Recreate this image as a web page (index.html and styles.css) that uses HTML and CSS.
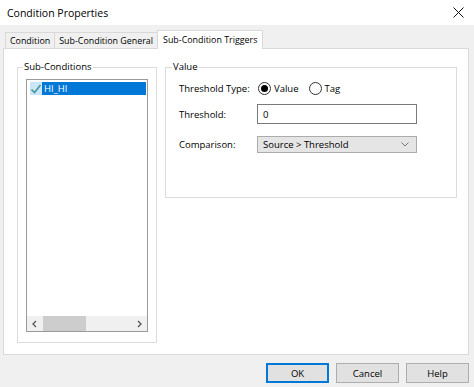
FILE: index.html
```html
<html lang="en">

<head>
    <meta charset="utf-8" />
    <title>Condition Properties</title>
    <link rel="stylesheet" href="styles.css">
</head>

<body>
    <div class="window">
        <div class="titlebar">
            <span class="title">Condition Properties</span>
            <svg class="close" viewBox="0 0 11 11">
                <path d="M0.5 0.5L10.5 10.5M10.5 0.5L0.5 10.5" stroke="#111" stroke-width="1" fill="none" />
            </svg>
        </div>
        <div class="content">
            <div class="tabs">
                <div class="tab">Condition</div>
                <div class="tab">Sub-Condition General</div>
                <div class="tab active">Sub-Condition Triggers</div>
            </div>
            <div class="panel">
                <fieldset class="group sub-group">
                    <legend>Sub-Conditions</legend>
                    <div class="listbox">
                        <div class="list-item">
                            <span class="check">
                                <svg viewBox="0 0 12 12">
                                    <path d="M1.5 6.5L4.5 9.5L10.5 2" stroke="#3f9a97" stroke-width="1.6" fill="none" />
                                </svg>
                            </span>
                            <span class="item-text">HI_HI</span>
                        </div>
                        <div class="hscroll">
                            <span class="arrow">
                                <svg viewBox="0 0 8 8"><path d="M5 1L2 4L5 7" stroke="#555" stroke-width="1.3" fill="none" /></svg>
                            </span>
                            <span class="thumb"></span>
                            <span class="track"></span>
                            <span class="arrow">
                                <svg viewBox="0 0 8 8"><path d="M3 1L6 4L3 7" stroke="#555" stroke-width="1.3" fill="none" /></svg>
                            </span>
                        </div>
                    </div>
                </fieldset>
                <fieldset class="group value-group">
                    <legend>Value</legend>
                    <div class="row row-type">
                        <span class="label">Threshold Type:</span>
                        <span class="radio checked"></span>
                        <span class="radio-text">Value</span>
                        <span class="radio"></span>
                        <span class="radio-text">Tag</span>
                    </div>
                    <div class="row row-threshold">
                        <span class="label">Threshold:</span>
                        <div class="textbox">0</div>
                    </div>
                    <div class="row row-compare">
                        <span class="label">Comparison:</span>
                        <div class="combo">
                            <span>Source &gt; Threshold</span>
                            <svg class="chevron" viewBox="0 0 8 5"><path d="M0.5 0.5L4 4L7.5 0.5" stroke="#777" stroke-width="1" fill="none" /></svg>
                        </div>
                    </div>
                </fieldset>
            </div>
            <div class="footer">
                <div class="button default">OK</div>
                <div class="button">Cancel</div>
                <div class="button">Help</div>
            </div>
        </div>
    </div>
</body>

</html>
```

FILE: styles.css
```css
* {
    box-sizing: border-box;
}

body {
    margin: 0;
    font-family: "Open Sans", "Noto Sans", sans-serif;
    font-size: 9.5px;
    color: #000;
    background: #f0f0f0;
}

.window {
    width: 474px;
    height: 387px;
    display: flex;
    flex-direction: column;
    overflow: hidden;
}

.titlebar {
    height: 25px;
    background: #fff;
    display: flex;
    align-items: center;
    justify-content: space-between;
    padding: 0 10px 0 7px;
}

.title {
    font-size: 10.5px;
}

.close {
    width: 11px;
    height: 11px;
}

.content {
    flex: 1;
    display: flex;
    flex-direction: column;
}

.tabs {
    height: 23px;
    display: flex;
    align-items: flex-end;
    padding-left: 5px;
    font-size: 8.9px;
}

.tab {
    height: 16px;
    padding: 0 4px;
    border: 1px solid #d9d9d9;
    border-bottom: none;
    margin-right: -1px;
    display: flex;
    align-items: center;
    background: #f0f0f0;
    white-space: nowrap;
}

.tab.active {
    height: 19px;
    padding: 0 5px 1px;
    background: #fff;
    margin-bottom: -1px;
    position: relative;
    z-index: 1;
}

.panel {
    margin-left: 3px;
    width: 466px;
    height: 307px;
    background: #fff;
    border: 1px solid #d9d9d9;
    display: flex;
    align-items: flex-start;
    gap: 8px;
    padding: 11px 0 0 13px;
}

.group {
    margin: 0;
    border: 1px solid #dcdcdc;
    min-width: 0;
}

.group legend {
    padding: 0 1px;
    line-height: 14px;
}

.sub-group {
    width: 140px;
    height: 283px;
    padding: 5px 8px 0;
}

.sub-group legend {
    margin-left: -3px;
}

.value-group {
    width: 292px;
    height: 138px;
    padding: 0 13px;
}

.value-group legend {
    margin-left: -7px;
}

.listbox {
    width: 122px;
    height: 253px;
    border: 1px solid #9a9a9a;
    display: flex;
    flex-direction: column;
    justify-content: space-between;
}

.list-item {
    display: flex;
    align-items: center;
    height: 13px;
    margin: 2px 0 0 3px;
}

.check {
    width: 12px;
    height: 13px;
    background: #cce4f7;
    display: flex;
    align-items: center;
}

.check svg {
    width: 12px;
    height: 12px;
}

.item-text {
    flex: 1;
    height: 13px;
    margin-right: 1px;
    background: #0078d7;
    color: #fff;
    padding-left: 2px;
    line-height: 13px;
}

.hscroll {
    height: 15px;
    display: flex;
    background: #f0f0f0;
}

.arrow {
    width: 16px;
    display: flex;
    align-items: center;
    justify-content: center;
}

.arrow svg {
    width: 8px;
    height: 8px;
}

.thumb {
    width: 43px;
    background: #cdcdcd;
}

.track {
    flex: 1;
}

.row {
    display: flex;
    align-items: center;
}

.label {
    width: 78px;
    flex-shrink: 0;
}

.row-type {
    height: 13px;
    margin-top: 8px;
}

.radio {
    width: 13px;
    height: 13px;
    margin-left: 1px;
    border: 1px solid #333;
    border-radius: 50%;
    display: flex;
    align-items: center;
    justify-content: center;
}

.radio.checked::after {
    content: "";
    width: 7px;
    height: 7px;
    border-radius: 50%;
    background: #000;
}

.radio-text {
    margin-left: 3px;
    margin-right: 9px;
}

.row-threshold {
    height: 20px;
    margin-top: 9px;
}

.textbox {
    width: 160px;
    height: 20px;
    border: 1px solid #7a7a7a;
    background: #fff;
    padding-left: 5px;
    display: flex;
    align-items: center;
}

.row-compare {
    height: 17px;
    margin-top: 12px;
}

.combo {
    width: 160px;
    height: 17px;
    border: 1px solid #acacac;
    background: #e5e5e5;
    padding: 0 7px 0 5px;
    display: flex;
    align-items: center;
    justify-content: space-between;
}

.chevron {
    width: 8px;
    height: 5px;
}

.footer {
    display: flex;
    justify-content: flex-end;
    gap: 7px;
    padding: 8px 5px 0 0;
}

.button {
    width: 63px;
    height: 20px;
    border: 1px solid #adadad;
    background: #e1e1e1;
    display: flex;
    align-items: center;
    justify-content: center;
}

.button.default {
    border: 2px solid #0078d7;
}
```
